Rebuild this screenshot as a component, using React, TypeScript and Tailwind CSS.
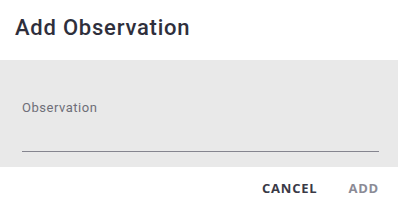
export default function App() {
  return (
    <div className="w-[398px] h-[204px] bg-white font-['Roboto',sans-serif]">
      <h1 className="pl-[15px] pt-[14px] h-[60px] text-[22px] leading-[28px] font-medium tracking-[0.035em] text-[#2f2f3c]">
        Add Observation
      </h1>
      <div className="bg-[#e9e9e9] h-[107px] pl-[22px] pr-[19px] pt-[40px]">
        <label className="block text-[13px] leading-[16px] tracking-[0.04em] text-[#6e6e78]">Observation</label>
        <input
          type="text"
          className="block w-full h-[36px] bg-transparent border-b border-[#85858f] outline-none"
        />
      </div>
      <div className="flex justify-end items-center gap-[31px] pr-[19px] pt-[6px] h-[37px] font-['Open_Sans',sans-serif] text-[13px] font-bold tracking-[0.06em]">
        <button className="text-[#393946]">CANCEL</button>
        <button className="text-[#8b8b96]">ADD</button>
      </div>
    </div>
  )
}
